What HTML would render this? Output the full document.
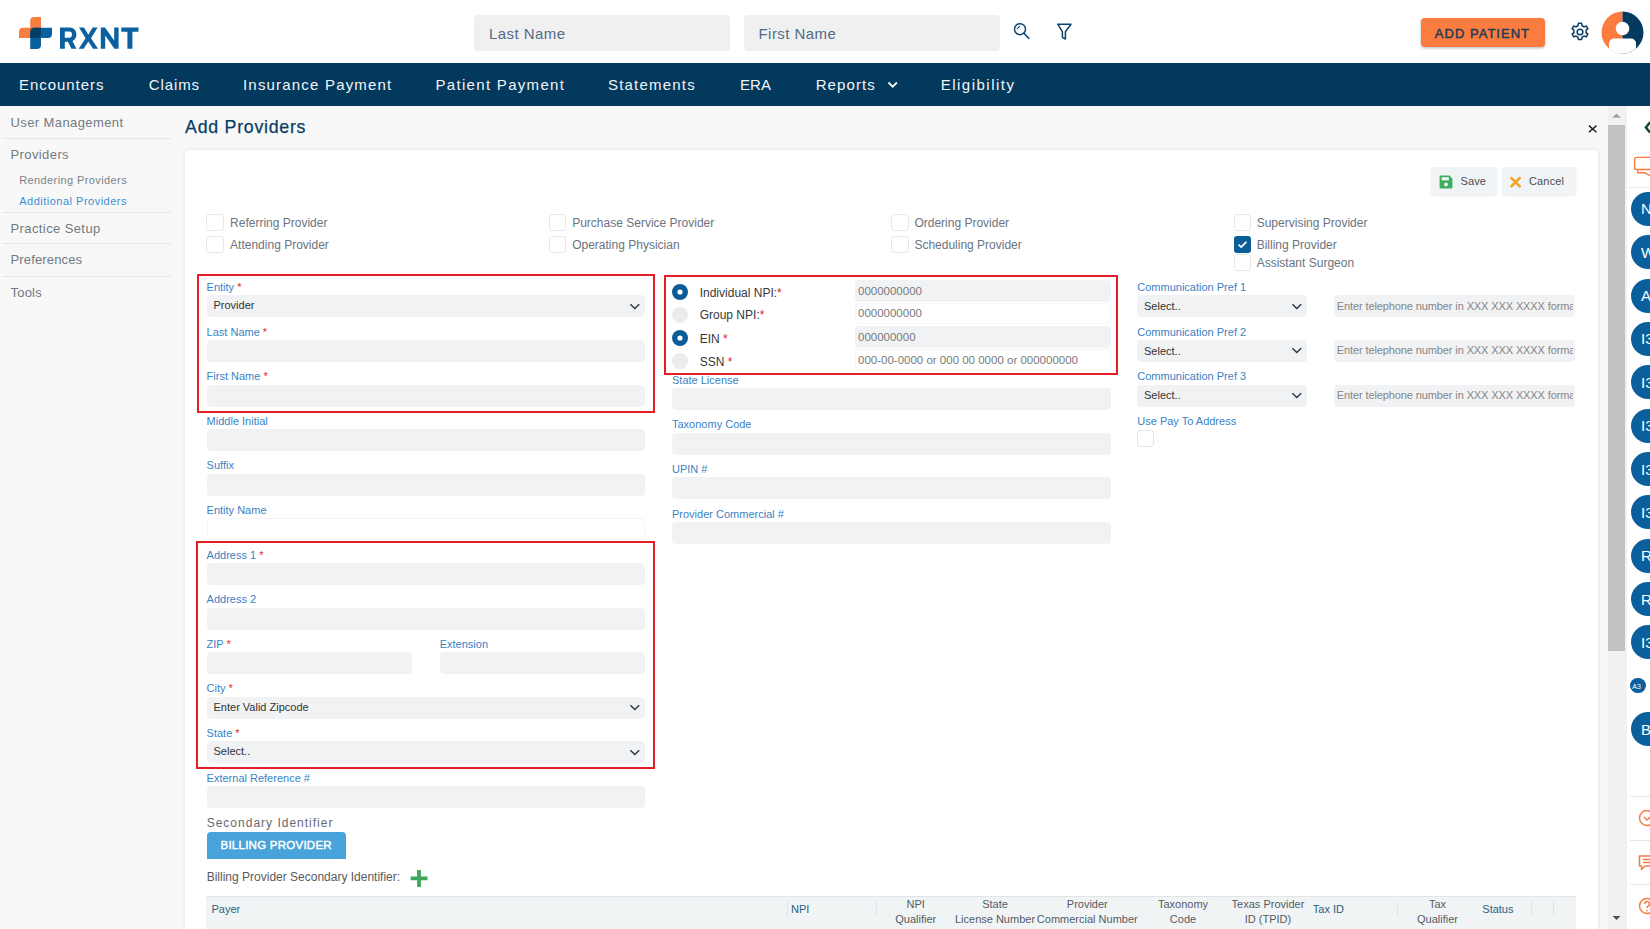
<!DOCTYPE html>
<html><head><meta charset="utf-8"><title>Add Providers</title>
<style>
html,body{margin:0;padding:0;}
body{width:1650px;height:929px;overflow:hidden;position:relative;background:#f8f8f8;font-family:"Liberation Sans", sans-serif;}
.t{position:absolute;white-space:nowrap;}
.b{position:absolute;box-sizing:border-box;}
svg{position:absolute;overflow:visible;}
</style></head><body>

<div class="b" style="left:0.0px;top:0.0px;width:1650.0px;height:63.0px;background:#fff"></div>
<svg style="left:0;top:0" width="160" height="60" viewBox="0 0 160 60">
<path d="M30.2 31 V21 a4 4 0 0 1 4 -4 H41 V38 H19 V31.7 a4 4 0 0 1 4 -4 H33 Z" fill="#f97d3f"/>
<path d="M33 27.7 H52 V34 a4 4 0 0 1 -4 4 H41 V45 a4 4 0 0 1 -4 4 H30.2 V33 Z" fill="#0b61a0"/>
<path d="M30.2 31.7 a4 4 0 0 1 4 -4 H41 V34 a4 4 0 0 1 -4 4 H30.2 Z" fill="#053d63"/>
</svg>
<svg style="left:0;top:0" width="160" height="60" viewBox="0 0 160 60">
<path fill="#0b61a0" fill-rule="evenodd" d="M60 27.4 H69.6 C73.9 27.4 76.4 30.4 76.4 34.5 C76.4 37.6 74.9 40 72.5 41 L76.4 48.8 H71.4 L67.9 41.7 H64.8 V48.8 H60 Z M64.8 31.6 V37.7 H69.4 C71.2 37.7 72 36.3 72 34.6 C72 32.9 71.2 31.6 69.4 31.6 Z"/>
<path fill="#0b61a0" d="M79 27.4 H84 L88.3 34.7 L92.6 27.4 H97.6 L91 38.2 L98.1 48.8 H93 L88.3 41.5 L83.7 48.8 H78.7 L85.6 38.2 Z"/>
<path fill="#0b61a0" d="M100.8 27.4 H105 L114.2 40.6 V27.4 H118.6 V48.8 H114.4 L105.2 35.6 V48.8 H100.8 Z"/>
<path fill="#0b61a0" d="M121.3 27.4 H138.5 V31.8 H132.4 V48.8 H127.4 V31.8 H121.3 Z"/>
</svg>
<div class="b" style="left:474.0px;top:14.5px;width:256.0px;height:36.2px;background:#f0f0f0;border-radius:4px"></div>
<div class="b" style="left:744.0px;top:14.5px;width:256.0px;height:36.2px;background:#f0f0f0;border-radius:4px"></div>
<div class="t" style="left:489.0px;top:26.10px;font-size:15px;line-height:15px;color:#506c86;font-weight:400;letter-spacing:0.45px;">Last Name</div>
<div class="t" style="left:758.5px;top:26.10px;font-size:15px;line-height:15px;color:#506c86;font-weight:400;letter-spacing:0.45px;">First Name</div>
<svg style="left:1000px;top:0px" width="100" height="50" viewBox="0 0 100 50">
<circle cx="20" cy="29.2" r="5.5" fill="none" stroke="#0b4470" stroke-width="1.45"/>
<path d="M23.9 33.2 L28.8 38.3" stroke="#0b4470" stroke-width="1.6" stroke-linecap="round"/>
<path d="M17.2 28.6 L19.6 26.3" stroke="#0b4470" stroke-width="1.1" stroke-linecap="round"/>
<path d="M57.8 24.2 H71 L65.4 31.8 V39 L62.4 37.3 V31.8 Z" fill="none" stroke="#0b4470" stroke-width="1.5" stroke-linejoin="round"/>
</svg>
<div class="b" style="left:1420.8px;top:18.0px;width:124.2px;height:28.7px;background:#fb7c3e;border-radius:4px;box-shadow:0 1px 3px rgba(0,0,0,0.3)"></div>
<div class="t" style="left:1434.8px;top:26.60px;font-size:13px;line-height:13px;color:#1d3a55;font-weight:400;letter-spacing:1.02px;-webkit-text-stroke:0.45px #1d3a55">ADD PATIENT</div>
<svg style="left:1568.7px;top:20.9px" width="22" height="22" viewBox="0 0 24 24">
<path fill="none" stroke="#0d3d62" stroke-width="1.65" stroke-linejoin="round" d="M10.3 2.5 h3.4 l0.5 2.6 a7.5 7.5 0 0 1 2.2 1.3 l2.5 -0.9 l1.7 2.9 l-2 1.7 a7.5 7.5 0 0 1 0 2.6 l2 1.7 l-1.7 2.9 l-2.5 -0.9 a7.5 7.5 0 0 1 -2.2 1.3 l-0.5 2.6 h-3.4 l-0.5 -2.6 a7.5 7.5 0 0 1 -2.2 -1.3 l-2.5 0.9 l-1.7 -2.9 l2 -1.7 a7.5 7.5 0 0 1 0 -2.6 l-2 -1.7 l1.7 -2.9 l2.5 0.9 a7.5 7.5 0 0 1 2.2 -1.3 Z"/>
<circle cx="12" cy="12" r="3.1" fill="none" stroke="#0d3d62" stroke-width="1.65"/>
</svg>
<svg style="left:1601px;top:11px" width="43" height="43" viewBox="0 0 43 43">
<defs><clipPath id="avc"><circle cx="21.5" cy="21.5" r="21"/></clipPath></defs>
<g clip-path="url(#avc)">
<rect x="0" y="0" width="21.5" height="43" fill="#fb7c3e"/>
<rect x="21.5" y="0" width="21.5" height="43" fill="#043a5e"/>
<circle cx="21.5" cy="17.5" r="6.8" fill="#fff"/>
<rect x="8" y="27.5" width="27" height="20" rx="5" fill="#fff"/>
</g></svg>
<div class="b" style="left:0.0px;top:63.0px;width:1650.0px;height:43.0px;background:#03395c"></div>
<div class="t" style="left:19.0px;top:77.10px;font-size:15px;line-height:15px;color:#f2f5f8;font-weight:400;letter-spacing:0.95px;">Encounters</div>
<div class="t" style="left:148.8px;top:77.10px;font-size:15px;line-height:15px;color:#f2f5f8;font-weight:400;letter-spacing:0.88px;">Claims</div>
<div class="t" style="left:243.0px;top:77.10px;font-size:15px;line-height:15px;color:#f2f5f8;font-weight:400;letter-spacing:1.19px;">Insurance Payment</div>
<div class="t" style="left:435.5px;top:77.10px;font-size:15px;line-height:15px;color:#f2f5f8;font-weight:400;letter-spacing:1.31px;">Patient Payment</div>
<div class="t" style="left:608.0px;top:77.10px;font-size:15px;line-height:15px;color:#f2f5f8;font-weight:400;letter-spacing:1.2px;">Statements</div>
<div class="t" style="left:740.0px;top:77.10px;font-size:15px;line-height:15px;color:#f2f5f8;font-weight:400;letter-spacing:0.1px;">ERA</div>
<div class="t" style="left:815.7px;top:77.10px;font-size:15px;line-height:15px;color:#f2f5f8;font-weight:400;letter-spacing:1.1px;">Reports</div>
<div class="t" style="left:940.7px;top:77.10px;font-size:15px;line-height:15px;color:#f2f5f8;font-weight:400;letter-spacing:1.5px;">Eligibility</div>
<svg style="left:886px;top:80px" width="14" height="10" viewBox="0 0 14 10">
<path d="M2.5 2.5 L6.7 6.7 L10.9 2.5" fill="none" stroke="#f2f5f8" stroke-width="1.8"/>
</svg>
<div class="t" style="left:10.5px;top:116.20px;font-size:13px;line-height:13px;color:#737a80;font-weight:400;letter-spacing:0.4px;">User Management</div>
<div class="b" style="left:2.0px;top:138.0px;width:168.5px;height:1.0px;background:#e7e7e7"></div>
<div class="t" style="left:10.5px;top:148.20px;font-size:13px;line-height:13px;color:#737a80;font-weight:400;letter-spacing:0.4px;">Providers</div>
<div class="t" style="left:19.2px;top:175.29px;font-size:11px;line-height:11px;color:#7d8186;font-weight:400;letter-spacing:0.4px;">Rendering Providers</div>
<div class="t" style="left:19.2px;top:195.59px;font-size:11px;line-height:11px;color:#3a8fcf;font-weight:400;letter-spacing:0.5px;">Additional Providers</div>
<div class="b" style="left:2.0px;top:212.0px;width:168.5px;height:1.0px;background:#e7e7e7"></div>
<div class="t" style="left:10.5px;top:221.60px;font-size:13px;line-height:13px;color:#737a80;font-weight:400;letter-spacing:0.4px;">Practice Setup</div>
<div class="b" style="left:2.0px;top:243.0px;width:168.5px;height:1.0px;background:#e7e7e7"></div>
<div class="t" style="left:10.5px;top:253.10px;font-size:13px;line-height:13px;color:#737a80;font-weight:400;letter-spacing:0.15px;">Preferences</div>
<div class="b" style="left:2.0px;top:276.0px;width:168.5px;height:1.0px;background:#e7e7e7"></div>
<div class="t" style="left:10.5px;top:285.60px;font-size:13px;line-height:13px;color:#737a80;font-weight:400;letter-spacing:0.2px;">Tools</div>
<div class="t" style="left:185.1px;top:119.33px;font-size:17.8px;line-height:17.8px;color:#083e64;font-weight:400;letter-spacing:0.72px;-webkit-text-stroke:0.25px #083e64">Add Providers</div>
<svg style="left:1587px;top:123px" width="12" height="12" viewBox="0 0 12 12">
<path d="M1.9 2.6 L9.5 9.3 M9.5 2.6 L1.9 9.3" stroke="#1c2230" stroke-width="1.4"/>
</svg>
<div class="b" style="left:185.0px;top:150.2px;width:1413.0px;height:789.8px;background:#fff;border-radius:3px;box-shadow:0 0 4px rgba(0,0,0,0.11)"></div>
<div class="b" style="left:1608.0px;top:106.0px;width:19.0px;height:823.0px;background:#f1f1f1"></div>
<div class="b" style="left:1608.2px;top:125.0px;width:16.8px;height:526.0px;background:#c1c1c1"></div>
<svg style="left:1608px;top:110px" width="18" height="10" viewBox="0 0 18 10">
<path d="M4.1 7.8 L12.9 7.8 L8.5 3.4 Z" fill="#a3a3a3"/>
</svg>
<svg style="left:1608px;top:912px" width="18" height="10" viewBox="0 0 18 10">
<path d="M4.5 4 L12.5 4 L8.5 8 Z" fill="#505050"/>
</svg>
<div class="b" style="left:1627.0px;top:106.0px;width:23.0px;height:823.0px;background:#fff"></div>
<div class="b" style="left:1431.3px;top:167.2px;width:66.2px;height:28.3px;background:#f1f4f6;border-radius:3px;box-shadow:0 1px 2px rgba(0,0,0,0.08)"></div>
<div class="b" style="left:1502.2px;top:167.2px;width:73.5px;height:28.3px;background:#f1f4f6;border-radius:3px;box-shadow:0 1px 2px rgba(0,0,0,0.08)"></div>
<svg style="left:1439px;top:175px" width="14" height="14" viewBox="0 0 14 14">
<path d="M0.6 1.8 a1.2 1.2 0 0 1 1.2 -1.2 H10.4 L13.4 3.6 V12.2 a1.2 1.2 0 0 1 -1.2 1.2 H1.8 a1.2 1.2 0 0 1 -1.2 -1.2 Z" fill="#3dae5d"/>
<rect x="2.6" y="2.2" width="7.2" height="3.2" fill="#f1f4f6"/>
<circle cx="7" cy="9.4" r="1.9" fill="#f1f4f6"/>
</svg>
<div class="t" style="left:1460.5px;top:175.99px;font-size:11px;line-height:11px;color:#4d4d4d;font-weight:400;letter-spacing:0.1px;">Save</div>
<svg style="left:1509px;top:176px" width="13" height="12" viewBox="0 0 13 12">
<path d="M2.3 2 L10.8 10.3 M10.8 2 L2.3 10.3" stroke="#f3a521" stroke-width="2.5" stroke-linecap="round"/>
</svg>
<div class="t" style="left:1529.0px;top:175.99px;font-size:11px;line-height:11px;color:#4d4d4d;font-weight:400;letter-spacing:0.15px;">Cancel</div>
<div class="b" style="left:206.4px;top:214.2px;width:17.3px;height:17.3px;background:#fff;border:1px solid #e6e8ea;border-radius:3px"></div>
<div class="t" style="left:230.1px;top:217.04px;font-size:12px;line-height:12px;color:#6b7480;font-weight:400;letter-spacing:0px;">Referring Provider</div>
<div class="b" style="left:206.4px;top:236.0px;width:17.3px;height:17.3px;background:#fff;border:1px solid #e6e8ea;border-radius:3px"></div>
<div class="t" style="left:230.1px;top:238.74px;font-size:12px;line-height:12px;color:#6b7480;font-weight:400;letter-spacing:0px;">Attending Provider</div>
<div class="b" style="left:548.5px;top:214.2px;width:17.3px;height:17.3px;background:#fff;border:1px solid #e6e8ea;border-radius:3px"></div>
<div class="t" style="left:572.2px;top:217.04px;font-size:12px;line-height:12px;color:#6b7480;font-weight:400;letter-spacing:0px;">Purchase Service Provider</div>
<div class="b" style="left:548.5px;top:236.0px;width:17.3px;height:17.3px;background:#fff;border:1px solid #e6e8ea;border-radius:3px"></div>
<div class="t" style="left:572.2px;top:238.74px;font-size:12px;line-height:12px;color:#6b7480;font-weight:400;letter-spacing:0px;">Operating Physician</div>
<div class="b" style="left:891.3px;top:214.2px;width:17.3px;height:17.3px;background:#fff;border:1px solid #e6e8ea;border-radius:3px"></div>
<div class="t" style="left:914.4px;top:217.04px;font-size:12px;line-height:12px;color:#6b7480;font-weight:400;letter-spacing:0px;">Ordering Provider</div>
<div class="b" style="left:891.3px;top:236.0px;width:17.3px;height:17.3px;background:#fff;border:1px solid #e6e8ea;border-radius:3px"></div>
<div class="t" style="left:914.4px;top:238.74px;font-size:12px;line-height:12px;color:#6b7480;font-weight:400;letter-spacing:0px;">Scheduling Provider</div>
<div class="b" style="left:1234.0px;top:214.2px;width:17.3px;height:17.3px;background:#fff;border:1px solid #e6e8ea;border-radius:3px"></div>
<div class="t" style="left:1256.7px;top:217.04px;font-size:12px;line-height:12px;color:#6b7480;font-weight:400;letter-spacing:0px;">Supervising Provider</div>
<div class="b" style="left:1234.0px;top:236.0px;width:17.3px;height:17.3px;background:#0b5d9a;border-radius:3px"></div>
<svg style="left:1234.0px;top:236.0px" width="17" height="17" viewBox="0 0 17 17">
<path d="M4.6 8.6 L7.2 11.1 L12.4 5.8" fill="none" stroke="#fff" stroke-width="1.8"/>
</svg>
<div class="t" style="left:1256.7px;top:238.74px;font-size:12px;line-height:12px;color:#6b7480;font-weight:400;letter-spacing:0px;">Billing Provider</div>
<div class="b" style="left:1234.0px;top:254.0px;width:17.3px;height:17.3px;background:#fff;border:1px solid #e6e8ea;border-radius:3px"></div>
<div class="t" style="left:1256.7px;top:256.74px;font-size:12px;line-height:12px;color:#6b7480;font-weight:400;letter-spacing:0px;">Assistant Surgeon</div>
<div class="b" style="left:197.3px;top:274.4px;width:457.5px;height:138.2px;border:2px solid #e51d27"></div>
<div class="t" style="left:206.6px;top:282.09px;font-size:11px;line-height:11px;color:#3a82c4;font-weight:400;letter-spacing:0px;">Entity <span style="color:#e51d27">*</span></div>
<div class="b" style="left:206.6px;top:295.3px;width:438.4px;height:22.0px;background:#f1f2f4;border-radius:4px"></div>
<svg style="left:628.5px;top:302.6px" width="12" height="8" viewBox="0 0 12 8">
<path d="M1.4 1.3 L5.8 5.5 L10.2 1.3" fill="none" stroke="#2d3748" stroke-width="1.45"/>
</svg>
<div class="t" style="left:206.6px;top:326.69px;font-size:11px;line-height:11px;color:#3a82c4;font-weight:400;letter-spacing:0px;">Last Name <span style="color:#e51d27">*</span></div>
<div class="b" style="left:206.6px;top:339.9px;width:438.4px;height:22.0px;background:#f1f2f4;border-radius:4px"></div>
<div class="t" style="left:206.6px;top:371.29px;font-size:11px;line-height:11px;color:#3a82c4;font-weight:400;letter-spacing:0px;">First Name <span style="color:#e51d27">*</span></div>
<div class="b" style="left:206.6px;top:384.5px;width:438.4px;height:22.0px;background:#f1f2f4;border-radius:4px"></div>
<div class="t" style="left:206.6px;top:415.89px;font-size:11px;line-height:11px;color:#3a82c4;font-weight:400;letter-spacing:0px;">Middle Initial</div>
<div class="b" style="left:206.6px;top:429.1px;width:438.4px;height:22.0px;background:#f1f2f4;border-radius:4px"></div>
<div class="t" style="left:206.6px;top:460.49px;font-size:11px;line-height:11px;color:#3a82c4;font-weight:400;letter-spacing:0px;">Suffix</div>
<div class="b" style="left:206.6px;top:473.7px;width:438.4px;height:22.0px;background:#f1f2f4;border-radius:4px"></div>
<div class="t" style="left:206.6px;top:505.09px;font-size:11px;line-height:11px;color:#3a82c4;font-weight:400;letter-spacing:0px;">Entity Name</div>
<div class="b" style="left:206.6px;top:518.3px;width:438.4px;height:22.0px;background:#fff;border:1px solid #f3f4f5;border-radius:4px"></div>
<div class="t" style="left:206.6px;top:549.69px;font-size:11px;line-height:11px;color:#3a82c4;font-weight:400;letter-spacing:0px;">Address 1 <span style="color:#e51d27">*</span></div>
<div class="b" style="left:206.6px;top:562.9px;width:438.4px;height:22.0px;background:#f1f2f4;border-radius:4px"></div>
<div class="t" style="left:206.6px;top:594.29px;font-size:11px;line-height:11px;color:#3a82c4;font-weight:400;letter-spacing:0px;">Address 2</div>
<div class="b" style="left:206.6px;top:607.5px;width:438.4px;height:22.0px;background:#f1f2f4;border-radius:4px"></div>
<div class="t" style="left:206.6px;top:638.89px;font-size:11px;line-height:11px;color:#3a82c4;font-weight:400;letter-spacing:0px;">ZIP <span style="color:#e51d27">*</span></div>
<div class="b" style="left:206.6px;top:652.1px;width:205.9px;height:22.0px;background:#f1f2f4;border-radius:4px"></div>
<div class="t" style="left:439.7px;top:638.89px;font-size:11px;line-height:11px;color:#3a82c4;font-weight:400;letter-spacing:0px;">Extension</div>
<div class="b" style="left:439.7px;top:652.1px;width:205.3px;height:22.0px;background:#f1f2f4;border-radius:4px"></div>
<div class="t" style="left:206.6px;top:683.49px;font-size:11px;line-height:11px;color:#3a82c4;font-weight:400;letter-spacing:0px;">City <span style="color:#e51d27">*</span></div>
<div class="b" style="left:206.6px;top:696.7px;width:438.4px;height:22.0px;background:#f1f2f4;border-radius:4px"></div>
<svg style="left:628.5px;top:704.0px" width="12" height="8" viewBox="0 0 12 8">
<path d="M1.4 1.3 L5.8 5.5 L10.2 1.3" fill="none" stroke="#2d3748" stroke-width="1.45"/>
</svg>
<div class="t" style="left:206.6px;top:728.09px;font-size:11px;line-height:11px;color:#3a82c4;font-weight:400;letter-spacing:0px;">State <span style="color:#e51d27">*</span></div>
<div class="b" style="left:206.6px;top:741.3px;width:438.4px;height:22.0px;background:#f1f2f4;border-radius:4px"></div>
<svg style="left:628.5px;top:748.5999999999999px" width="12" height="8" viewBox="0 0 12 8">
<path d="M1.4 1.3 L5.8 5.5 L10.2 1.3" fill="none" stroke="#2d3748" stroke-width="1.45"/>
</svg>
<div class="t" style="left:206.6px;top:772.69px;font-size:11px;line-height:11px;color:#3a82c4;font-weight:400;letter-spacing:0px;">External Reference #</div>
<div class="b" style="left:206.6px;top:785.9px;width:438.4px;height:22.0px;background:#f1f2f4;border-radius:4px"></div>
<div class="t" style="left:213.5px;top:300.49px;font-size:11px;line-height:11px;color:#333;font-weight:400;letter-spacing:0px;">Provider</div>
<div class="t" style="left:213.5px;top:701.89px;font-size:11px;line-height:11px;color:#333;font-weight:400;letter-spacing:0px;">Enter Valid Zipcode</div>
<div class="t" style="left:213.5px;top:746.49px;font-size:11px;line-height:11px;color:#333;font-weight:400;letter-spacing:0px;">Select..</div>
<div class="b" style="left:196.3px;top:540.8px;width:458.7px;height:228.5px;border:2px solid #e51d27"></div>
<div class="b" style="left:664.4px;top:275.3px;width:453.6px;height:99.5px;border:2px solid #e51d27"></div>
<svg style="left:672px;top:283.8px" width="16" height="16" viewBox="0 0 16 16">
<circle cx="8" cy="8" r="8" fill="#0b5d9a"/><circle cx="8" cy="8" r="2.6" fill="#fff"/></svg>
<div class="t" style="left:699.7px;top:286.54px;font-size:12px;line-height:12px;color:#383838;font-weight:400;letter-spacing:0px;">Individual NPI:<span style="color:#e51d27">*</span></div>
<div class="b" style="left:854.7px;top:280.3px;width:255.9px;height:21.7px;background:#f1f2f4;border-radius:4px"></div>
<div class="t" style="left:858.0px;top:285.97px;font-size:11.5px;line-height:11.5px;color:#7a7a7a;font-weight:400;letter-spacing:0px;">0000000000</div>
<svg style="left:672px;top:306.6px" width="16" height="16" viewBox="0 0 16 16">
<circle cx="8" cy="8" r="8" fill="#ebecee"/></svg>
<div class="t" style="left:699.7px;top:309.34px;font-size:12px;line-height:12px;color:#383838;font-weight:400;letter-spacing:0px;">Group NPI:<span style="color:#e51d27">*</span></div>
<div class="b" style="left:854.7px;top:302.8px;width:255.9px;height:21.7px;background:#fff;border:1px solid #f3f4f5;border-radius:4px"></div>
<div class="t" style="left:858.0px;top:308.47px;font-size:11.5px;line-height:11.5px;color:#7a7a7a;font-weight:400;letter-spacing:0px;">0000000000</div>
<svg style="left:672px;top:329.8px" width="16" height="16" viewBox="0 0 16 16">
<circle cx="8" cy="8" r="8" fill="#0b5d9a"/><circle cx="8" cy="8" r="2.6" fill="#fff"/></svg>
<div class="t" style="left:699.7px;top:332.54px;font-size:12px;line-height:12px;color:#383838;font-weight:400;letter-spacing:0px;">EIN <span style="color:#e51d27">*</span></div>
<div class="b" style="left:854.7px;top:326.0px;width:255.9px;height:21.7px;background:#f1f2f4;border-radius:4px"></div>
<div class="t" style="left:858.0px;top:331.67px;font-size:11.5px;line-height:11.5px;color:#7a7a7a;font-weight:400;letter-spacing:0px;">000000000</div>
<svg style="left:672px;top:353.0px" width="16" height="16" viewBox="0 0 16 16">
<circle cx="8" cy="8" r="8" fill="#ebecee"/></svg>
<div class="t" style="left:699.7px;top:355.74px;font-size:12px;line-height:12px;color:#383838;font-weight:400;letter-spacing:0px;">SSN <span style="color:#e51d27">*</span></div>
<div class="b" style="left:854.7px;top:349.0px;width:255.9px;height:21.7px;background:#fff;border:1px solid #f3f4f5;border-radius:4px"></div>
<div class="t" style="left:858.0px;top:354.67px;font-size:11.5px;line-height:11.5px;color:#7a7a7a;font-weight:400;letter-spacing:0px;">000-00-0000 or 000 00 0000 or 000000000</div>
<div class="t" style="left:672.0px;top:374.79px;font-size:11px;line-height:11px;color:#3a82c4;font-weight:400;letter-spacing:0px;">State License</div>
<div class="b" style="left:672.0px;top:388.0px;width:439.0px;height:22.0px;background:#f1f2f4;border-radius:4px"></div>
<div class="t" style="left:672.0px;top:419.29px;font-size:11px;line-height:11px;color:#3a82c4;font-weight:400;letter-spacing:0px;">Taxonomy Code</div>
<div class="b" style="left:672.0px;top:432.5px;width:439.0px;height:22.0px;background:#f1f2f4;border-radius:4px"></div>
<div class="t" style="left:672.0px;top:463.79px;font-size:11px;line-height:11px;color:#3a82c4;font-weight:400;letter-spacing:0px;">UPIN #</div>
<div class="b" style="left:672.0px;top:477.0px;width:439.0px;height:22.0px;background:#f1f2f4;border-radius:4px"></div>
<div class="t" style="left:672.0px;top:508.79px;font-size:11px;line-height:11px;color:#3a82c4;font-weight:400;letter-spacing:0px;">Provider Commercial #</div>
<div class="b" style="left:672.0px;top:522.0px;width:439.0px;height:22.0px;background:#f1f2f4;border-radius:4px"></div>
<div class="t" style="left:1137.3px;top:282.09px;font-size:11px;line-height:11px;color:#3a82c4;font-weight:400;letter-spacing:0px;">Communication Pref 1</div>
<div class="b" style="left:1137.3px;top:295.3px;width:169.7px;height:22.0px;background:#f1f2f4;border-radius:4px"></div>
<svg style="left:1290.5px;top:302.6px" width="12" height="8" viewBox="0 0 12 8">
<path d="M1.4 1.3 L5.8 5.5 L10.2 1.3" fill="none" stroke="#2d3748" stroke-width="1.45"/>
</svg>
<div class="t" style="left:1144.0px;top:300.99px;font-size:11px;line-height:11px;color:#333;font-weight:400;letter-spacing:0px;">Select..</div>
<div class="b" style="left:1333.7px;top:295.3px;width:241.8px;height:22.0px;background:#f1f2f4;border-radius:4px"></div>
<div class="t" style="left:1336.8px;top:298.8px;width:236.5px;overflow:hidden;font-size:11px;letter-spacing:-0.11px;line-height:15px;color:#858585">Enter telephone number in XXX XXX XXXX format</div>
<div class="t" style="left:1137.3px;top:326.69px;font-size:11px;line-height:11px;color:#3a82c4;font-weight:400;letter-spacing:0px;">Communication Pref 2</div>
<div class="b" style="left:1137.3px;top:339.9px;width:169.7px;height:22.0px;background:#f1f2f4;border-radius:4px"></div>
<svg style="left:1290.5px;top:347.20000000000005px" width="12" height="8" viewBox="0 0 12 8">
<path d="M1.4 1.3 L5.8 5.5 L10.2 1.3" fill="none" stroke="#2d3748" stroke-width="1.45"/>
</svg>
<div class="t" style="left:1144.0px;top:345.59px;font-size:11px;line-height:11px;color:#333;font-weight:400;letter-spacing:0px;">Select..</div>
<div class="b" style="left:1333.7px;top:339.9px;width:241.8px;height:22.0px;background:#f1f2f4;border-radius:4px"></div>
<div class="t" style="left:1336.8px;top:343.4px;width:236.5px;overflow:hidden;font-size:11px;letter-spacing:-0.11px;line-height:15px;color:#858585">Enter telephone number in XXX XXX XXXX format</div>
<div class="t" style="left:1137.3px;top:371.29px;font-size:11px;line-height:11px;color:#3a82c4;font-weight:400;letter-spacing:0px;">Communication Pref 3</div>
<div class="b" style="left:1137.3px;top:384.5px;width:169.7px;height:22.0px;background:#f1f2f4;border-radius:4px"></div>
<svg style="left:1290.5px;top:391.8px" width="12" height="8" viewBox="0 0 12 8">
<path d="M1.4 1.3 L5.8 5.5 L10.2 1.3" fill="none" stroke="#2d3748" stroke-width="1.45"/>
</svg>
<div class="t" style="left:1144.0px;top:390.19px;font-size:11px;line-height:11px;color:#333;font-weight:400;letter-spacing:0px;">Select..</div>
<div class="b" style="left:1333.7px;top:384.5px;width:241.8px;height:22.0px;background:#f1f2f4;border-radius:4px"></div>
<div class="t" style="left:1336.8px;top:388.0px;width:236.5px;overflow:hidden;font-size:11px;letter-spacing:-0.11px;line-height:15px;color:#858585">Enter telephone number in XXX XXX XXXX format</div>
<div class="t" style="left:1137.3px;top:415.79px;font-size:11px;line-height:11px;color:#3a82c4;font-weight:400;letter-spacing:0px;">Use Pay To Address</div>
<div class="b" style="left:1137.0px;top:430.4px;width:17.0px;height:17.0px;background:#fff;border:1px solid #e3e5e8;border-radius:3px"></div>
<div class="t" style="left:206.7px;top:817.34px;font-size:12px;line-height:12px;color:#666a6e;font-weight:400;letter-spacing:1.0px;">Secondary Identifier</div>
<div class="b" style="left:206.7px;top:831.5px;width:139.3px;height:27.7px;background:#48a3da;border-radius:4px 4px 0 0"></div>
<div class="t" style="left:220.5px;top:839.87px;font-size:11.5px;line-height:11.5px;color:#fff;font-weight:400;letter-spacing:0.25px;-webkit-text-stroke:0.45px #fff">BILLING PROVIDER</div>
<div class="t" style="left:206.7px;top:871.44px;font-size:12px;line-height:12px;color:#5a5a5a;font-weight:400;letter-spacing:0px;">Billing Provider Secondary Identifier:</div>
<svg style="left:410px;top:868.5px" width="18" height="18" viewBox="0 0 18 18">
<path d="M9 1 V18 M0.7 9.3 H17.5" stroke="#3ea85a" stroke-width="3.8"/>
</svg>
<div class="b" style="left:206.0px;top:895.8px;width:1369.7px;height:44.2px;background:#f1f4f5;border-top:1px solid #e2e5e7"></div>
<div class="t" style="left:211.5px;top:903.99px;font-size:11px;line-height:11px;color:#2b5f80;font-weight:400;letter-spacing:0px;">Payer</div>
<div class="t" style="left:791.0px;top:903.99px;font-size:11px;line-height:11px;color:#2b5f80;font-weight:400;letter-spacing:0px;">NPI</div>
<div class="t" style="left:1312.8px;top:903.99px;font-size:11px;line-height:11px;color:#2b5f80;font-weight:400;letter-spacing:0px;">Tax ID</div>
<div class="t" style="left:1482.3px;top:903.99px;font-size:11px;line-height:11px;color:#2b5f80;font-weight:400;letter-spacing:0px;">Status</div>
<div class="b" style="left:786.7px;top:901.3px;width:1.0px;height:15.0px;background:#e1e4e7"></div>
<div class="b" style="left:875.8px;top:901.3px;width:1.0px;height:15.0px;background:#e1e4e7"></div>
<div class="b" style="left:1397.0px;top:901.3px;width:1.0px;height:15.0px;background:#e1e4e7"></div>
<div class="b" style="left:1531.0px;top:901.3px;width:1.0px;height:15.0px;background:#e1e4e7"></div>
<div class="b" style="left:1553.2px;top:901.3px;width:1.0px;height:15.0px;background:#e1e4e7"></div>
<div class="t" style="left:765.7px;width:300px;text-align:center;top:899.19px;font-size:11px;line-height:11px;color:#555b66;font-weight:400;letter-spacing:0px;">NPI</div>
<div class="t" style="left:765.7px;width:300px;text-align:center;top:914.09px;font-size:11px;line-height:11px;color:#555b66;font-weight:400;letter-spacing:0px;">Qualifier</div>
<div class="t" style="left:845.0px;width:300px;text-align:center;top:899.19px;font-size:11px;line-height:11px;color:#555b66;font-weight:400;letter-spacing:0px;">State</div>
<div class="t" style="left:845.0px;width:300px;text-align:center;top:914.09px;font-size:11px;line-height:11px;color:#555b66;font-weight:400;letter-spacing:0px;">License Number</div>
<div class="t" style="left:937.3px;width:300px;text-align:center;top:899.19px;font-size:11px;line-height:11px;color:#555b66;font-weight:400;letter-spacing:0px;">Provider</div>
<div class="t" style="left:937.3px;width:300px;text-align:center;top:914.09px;font-size:11px;line-height:11px;color:#555b66;font-weight:400;letter-spacing:0px;">Commercial Number</div>
<div class="t" style="left:1033.0px;width:300px;text-align:center;top:899.19px;font-size:11px;line-height:11px;color:#555b66;font-weight:400;letter-spacing:0px;">Taxonomy</div>
<div class="t" style="left:1033.0px;width:300px;text-align:center;top:914.09px;font-size:11px;line-height:11px;color:#555b66;font-weight:400;letter-spacing:0px;">Code</div>
<div class="t" style="left:1118.0px;width:300px;text-align:center;top:899.19px;font-size:11px;line-height:11px;color:#555b66;font-weight:400;letter-spacing:0px;">Texas Provider</div>
<div class="t" style="left:1118.0px;width:300px;text-align:center;top:914.09px;font-size:11px;line-height:11px;color:#555b66;font-weight:400;letter-spacing:0px;">ID (TPID)</div>
<div class="t" style="left:1287.5px;width:300px;text-align:center;top:899.19px;font-size:11px;line-height:11px;color:#555b66;font-weight:400;letter-spacing:0px;">Tax</div>
<div class="t" style="left:1287.5px;width:300px;text-align:center;top:914.09px;font-size:11px;line-height:11px;color:#555b66;font-weight:400;letter-spacing:0px;">Qualifier</div>
<svg style="left:1625px;top:110px" width="25" height="30" viewBox="0 0 25 30">
<path d="M25 12.2 L20.9 17.4 L25 22.6" fill="none" stroke="#0d4a36" stroke-width="2.5"/>
</svg>
<svg style="left:1625px;top:150px" width="25" height="30" viewBox="0 0 25 30">
<path d="M9.6 19.5 V9.4 a2 2 0 0 1 2 -2 H27 M9.6 17.5 a2 2 0 0 0 2 2 H27 M12.8 19.5 V22.7 H19.7 L25.5 26" fill="none" stroke="#f57a3c" stroke-width="1.35" stroke-linejoin="round"/>
</svg>
<div class="b" style="left:1628.0px;top:186.5px;width:22.0px;height:1.0px;background:#eaeaea"></div>
<div class="b" style="left:1630.5px;top:191.8px;width:34px;height:34px;border-radius:50%;background:#0b5f9c"></div>
<div class="t" style="left:1641.0px;top:201.40px;font-size:15px;line-height:15px;color:#fff;font-weight:400;letter-spacing:0px;">N</div>
<div class="b" style="left:1630.5px;top:235.2px;width:34px;height:34px;border-radius:50%;background:#0b5f9c"></div>
<div class="t" style="left:1641.0px;top:244.75px;font-size:15px;line-height:15px;color:#fff;font-weight:400;letter-spacing:0px;">W</div>
<div class="b" style="left:1630.5px;top:278.5px;width:34px;height:34px;border-radius:50%;background:#0b5f9c"></div>
<div class="t" style="left:1641.0px;top:288.10px;font-size:15px;line-height:15px;color:#fff;font-weight:400;letter-spacing:0px;">A</div>
<div class="b" style="left:1630.5px;top:321.9px;width:34px;height:34px;border-radius:50%;background:#0b5f9c"></div>
<div class="t" style="left:1641.0px;top:331.45px;font-size:15px;line-height:15px;color:#fff;font-weight:400;letter-spacing:0px;">I3</div>
<div class="b" style="left:1630.5px;top:365.2px;width:34px;height:34px;border-radius:50%;background:#0b5f9c"></div>
<div class="t" style="left:1641.0px;top:374.80px;font-size:15px;line-height:15px;color:#fff;font-weight:400;letter-spacing:0px;">I3</div>
<div class="b" style="left:1630.5px;top:408.6px;width:34px;height:34px;border-radius:50%;background:#0b5f9c"></div>
<div class="t" style="left:1641.0px;top:418.15px;font-size:15px;line-height:15px;color:#fff;font-weight:400;letter-spacing:0px;">I3</div>
<div class="b" style="left:1630.5px;top:451.9px;width:34px;height:34px;border-radius:50%;background:#0b5f9c"></div>
<div class="t" style="left:1641.0px;top:461.50px;font-size:15px;line-height:15px;color:#fff;font-weight:400;letter-spacing:0px;">I3</div>
<div class="b" style="left:1630.5px;top:495.2px;width:34px;height:34px;border-radius:50%;background:#0b5f9c"></div>
<div class="t" style="left:1641.0px;top:504.85px;font-size:15px;line-height:15px;color:#fff;font-weight:400;letter-spacing:0px;">I3</div>
<div class="b" style="left:1630.5px;top:538.6px;width:34px;height:34px;border-radius:50%;background:#0b5f9c"></div>
<div class="t" style="left:1641.0px;top:548.20px;font-size:15px;line-height:15px;color:#fff;font-weight:400;letter-spacing:0px;">RC</div>
<div class="b" style="left:1630.5px;top:582.0px;width:34px;height:34px;border-radius:50%;background:#0b5f9c"></div>
<div class="t" style="left:1641.0px;top:591.55px;font-size:15px;line-height:15px;color:#fff;font-weight:400;letter-spacing:0px;">RC</div>
<div class="b" style="left:1630.5px;top:625.3px;width:34px;height:34px;border-radius:50%;background:#0b5f9c"></div>
<div class="t" style="left:1641.0px;top:634.90px;font-size:15px;line-height:15px;color:#fff;font-weight:400;letter-spacing:0px;">I3</div>
<div class="b" style="left:1630.5px;top:712.0px;width:34px;height:34px;border-radius:50%;background:#0b5f9c"></div>
<div class="t" style="left:1641.0px;top:721.60px;font-size:15px;line-height:15px;color:#fff;font-weight:400;letter-spacing:0px;">BA</div>
<div class="b" style="left:1630.3px;top:677.8px;width:15.7px;height:15.7px;border-radius:50%;background:#0b5f9c"></div>
<div class="t" style="left:1632.3px;top:683.27px;font-size:7px;line-height:7px;color:#fff;font-weight:400;letter-spacing:0px;">A3</div>
<div class="b" style="left:1630.0px;top:796.0px;width:20.0px;height:1.0px;background:#e6e6e6"></div>
<div class="b" style="left:1630.0px;top:839.7px;width:20.0px;height:1.0px;background:#e6e6e6"></div>
<div class="b" style="left:1630.0px;top:883.8px;width:20.0px;height:1.0px;background:#e6e6e6"></div>
<svg style="left:1637px;top:809px" width="20" height="20" viewBox="0 0 20 20">
<circle cx="10" cy="9" r="7.5" fill="none" stroke="#f57c3f" stroke-width="1.5"/>
<path d="M6.8 8 L10 11 L13.2 8" fill="none" stroke="#f57c3f" stroke-width="1.5"/>
</svg>
<svg style="left:1637px;top:853px" width="20" height="20" viewBox="0 0 20 20">
<path d="M2.5 3 H18 V13 H8 L4.5 16.5 V13 H2.5 Z" fill="none" stroke="#f57c3f" stroke-width="1.5" stroke-linejoin="round"/>
<path d="M6 6.5 H15 M6 9.5 H13" stroke="#f57c3f" stroke-width="1.3"/>
</svg>
<svg style="left:1637px;top:897px" width="20" height="20" viewBox="0 0 20 20">
<circle cx="10" cy="9" r="7.5" fill="none" stroke="#f57c3f" stroke-width="1.5"/>
<path d="M7.6 7 a2.4 2.4 0 1 1 3.4 2.2 c-0.8 0.4 -1 0.9 -1 1.8" fill="none" stroke="#f57c3f" stroke-width="1.5"/>
<circle cx="10" cy="13.6" r="0.9" fill="#f57c3f"/>
</svg>
</body></html>
